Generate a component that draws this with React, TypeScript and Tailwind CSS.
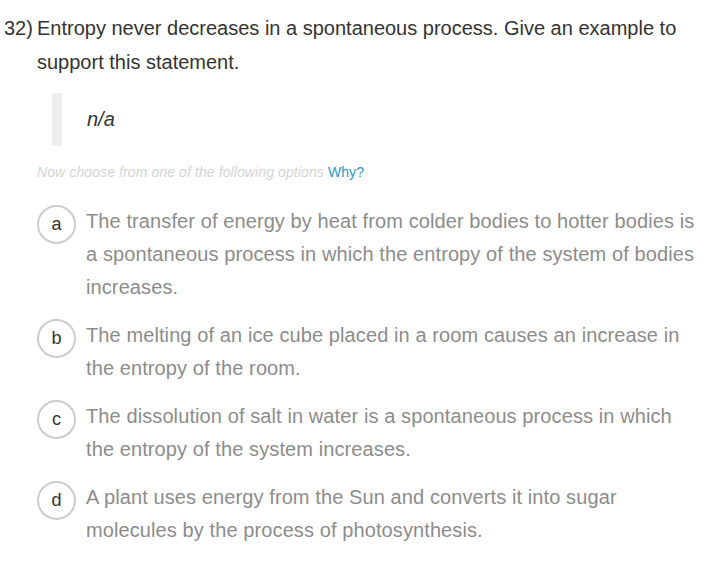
const options = [
  {
    key: "a",
    text: "The transfer of energy by heat from colder bodies to hotter bodies is a spontaneous process in which the entropy of the system of bodies increases.",
  },
  {
    key: "b",
    text: "The melting of an ice cube placed in a room causes an increase in the entropy of the room.",
  },
  {
    key: "c",
    text: "The dissolution of salt in water is a spontaneous process in which the entropy of the system increases.",
  },
  {
    key: "d",
    text: "A plant uses energy from the Sun and converts it into sugar molecules by the process of photosynthesis.",
  },
];

export default function App() {
  return (
    <div
      className="min-h-screen bg-white pl-[4px] pr-[14px] pt-[11px] antialiased"
      style={{ fontFamily: '"Liberation Sans", Arial, sans-serif' }}
    >
      <div className="flex text-[20px] leading-[34px] text-[#333]">
        <span className="w-[33px] shrink-0">32)</span>
        <p>Entropy never decreases in a spontaneous process. Give an example to support this statement.</p>
      </div>

      <div className="ml-[48px]">
        <blockquote className="mt-[14px] border-l-[10px] border-[#eeeeee] py-[10px] pl-[25px] text-[20px] italic leading-[33px] text-[#333]">
          n/a
        </blockquote>

        <p className="-ml-[15px] mt-[16px] text-[14px] leading-[20px] tracking-[0.1px]">
          <span className="italic text-[#d4d4d4]">Now choose from one of the following options</span>{" "}
          <span className="text-[#2a9bbf]">Why?</span>
        </p>

        <ul className="-ml-[15px] mt-[23px] flex flex-col gap-[15px]">
          {options.map((option) => (
            <li key={option.key} className="flex items-start gap-[10px]">
              <span className="flex h-[39px] w-[39px] shrink-0 items-center justify-center rounded-full border-2 border-[#cccccc] text-[18px] font-medium text-[#333]">
                {option.key}
              </span>
              <p className="text-[20px] leading-[33px] tracking-[0.1px] text-[#8c8c8c]">{option.text}</p>
            </li>
          ))}
        </ul>
      </div>
    </div>
  );
}
